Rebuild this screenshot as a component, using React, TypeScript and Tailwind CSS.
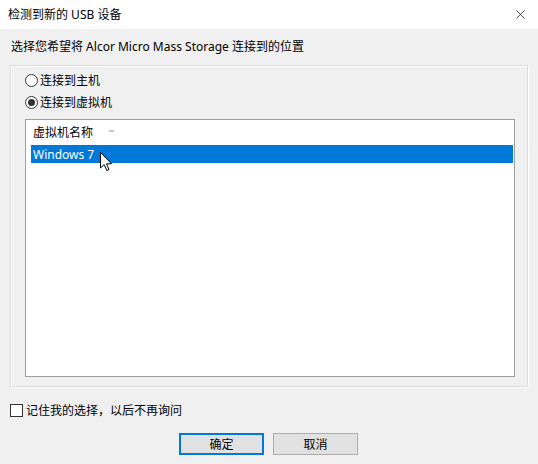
import { X } from "lucide-react"

function Radio({ checked, label }: { checked?: boolean; label: string }) {
  return (
    <div className="flex items-center h-[22px]">
      <span className="w-[13px] h-[13px] rounded-full border border-[#333] bg-white flex items-center justify-center">
        {checked && <span className="w-[7px] h-[7px] rounded-full bg-[#333]" />}
      </span>
      <span className="ml-[2px]">{label}</span>
    </div>
  )
}

function Cursor() {
  return (
    <svg width="13" height="20" viewBox="0 0 13 20" className="absolute left-[100px] top-[152px]">
      <path d="M0.5 0.5 L0.5 16 L4.2 12.6 L6.8 18.6 L9 17.6 L6.5 11.8 L11.5 11.8 Z" fill="#fff" stroke="#000" strokeWidth="1" strokeLinejoin="miter" />
    </svg>
  )
}

export default function App() {
  return (
    <div className="relative w-[538px] h-[464px] bg-[#f0f0f0] text-[12px] leading-[17px] text-black font-['Noto_Sans','Noto_Sans_CJK_SC',sans-serif] overflow-hidden">
      {/* title bar */}
      <div className="h-[29px] bg-white flex items-center justify-between pl-[8px] pr-[10px]">
        <span>检测到新的 USB 设备</span>
        <X size={15} strokeWidth={1.2} className="text-[#111]" />
      </div>

      <div className="px-[10px]">
        <div className="mt-[9px] pl-[1px]">选择您希望将 Alcor Micro Mass Storage 连接到的位置</div>

        {/* group */}
        <div className="mt-[10px] h-[322px] w-[518px] border border-[#dcdcdc] shadow-[inset_1px_1px_0_#fff,1px_1px_0_#fff] pt-[3px] pl-[14px] pr-[12px] flex flex-col">
          <Radio label="连接到主机" />
          <Radio checked label="连接到虚拟机" />

          <div className="mt-[6px] h-[258px] border border-[#a0a0a0] bg-white flex flex-col">
            <div className="h-[25px] flex items-center pl-[7px]">
              <span>虚拟机名称</span>
              <span className="ml-[16px] mb-[3px] w-[5px] h-[2px] bg-[#c8c8c8]" />
            </div>
            <div className="h-[18px] ml-[5px] mr-[1px] bg-[#0078d7] text-white flex items-center pl-[2px]">
              Windows 7
            </div>
          </div>
        </div>

        {/* remember */}
        <div className="mt-[15px] flex items-center">
          <span className="w-[13px] h-[13px] border border-[#333] bg-white" />
          <span className="ml-[3px]">记住我的选择，以后不再询问</span>
        </div>

        <div className="mt-[14px] flex justify-center gap-[9px] pr-[1px]">
          <button className="w-[85px] h-[22px] border-2 border-[#0078d7] bg-[#e1e1e1] flex items-center justify-center">
            确定
          </button>
          <button className="w-[85px] h-[22px] border border-[#adadad] bg-[#e1e1e1] flex items-center justify-center">
            取消
          </button>
        </div>
      </div>

      <Cursor />
    </div>
  )
}
